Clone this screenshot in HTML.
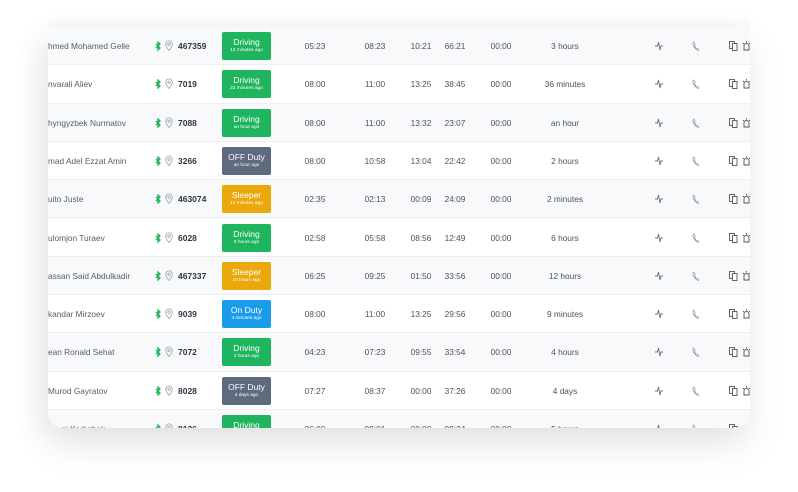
<!DOCTYPE html>
<html><head><meta charset="utf-8"><style>
*{margin:0;padding:0;box-sizing:border-box}
body{width:798px;height:492px;background:#fff;overflow:hidden;font-family:"Liberation Sans",sans-serif;position:relative}
.card{position:absolute;left:48px;top:27px;width:702px;height:401px;background:#fff;border-radius:0 0 16px 16px;overflow:hidden;box-shadow:0 18px 40px rgba(0,0,0,0.08),-10px 10px 30px rgba(0,0,0,0.05)}
.row{position:absolute;left:0;width:702px;height:38.3px;border-bottom:1px solid #eceef2}
.row.g{background:#f8f9fb}
.c{position:absolute;top:0;height:38px;line-height:38px;font-size:8.3px;color:#4a5160;white-space:nowrap}
.t{transform:translateX(-50%)}
.num{font-weight:bold;font-size:8.5px;color:#2f3542}
.badge{position:absolute;left:174px;top:5px;width:49px;height:28px;border-radius:2px;color:#fff;text-align:center}
.badge b{display:block;font-weight:normal;font-size:8.5px;line-height:10px;margin-top:5px}
.badge i{display:block;font-style:normal;font-size:4.8px;line-height:7px}
.dr{background:#1fb45e}.of{background:#5e6a7d}.sl{background:#eba80b}.on{background:#1b9ceb}
svg{position:absolute}
</style></head><body>
<div style="position:absolute;left:48px;top:14px;width:702px;height:14px;background:linear-gradient(#fff,#f8f9fb)"></div>
<div class="card" id="card"></div>
<script>
const d=[
["hmed Mohamed Gelle","467359","dr","Driving","13 minutes ago","05:23","08:23","10:21","66:21","00:00","3 hours"],
["nvarali Aliev","7019","dr","Driving","22 minutes ago","08:00","11:00","13:25","38:45","00:00","36 minutes"],
["hyngyzbek Nurmatov","7088","dr","Driving","an hour ago","08:00","11:00","13:32","23:07","00:00","an hour"],
["mad Adel Ezzat Amin","3266","of","OFF Duty","an hour ago","08:00","10:58","13:04","22:42","00:00","2 hours"],
["uito Juste","463074","sl","Sleeper","12 minutes ago","02:35","02:13","00:09","24:09","00:00","2 minutes"],
["ulomjon Turaev","6028","dr","Driving","6 hours ago","02:58","05:58","08:56","12:49","00:00","6 hours"],
["assan Said Abdulkadir","467337","sl","Sleeper","10 hours ago","06:25","09:25","01:50","33:56","00:00","12 hours"],
["kandar Mirzoev","9039","on","On Duty","4 minutes ago","08:00","11:00","13:25","29:56","00:00","9 minutes"],
["ean Ronald Sehat","7072","dr","Driving","2 hours ago","04:23","07:23","09:55","33:54","00:00","4 hours"],
["Murod Gayratov","8028","of","OFF Duty","4 days ago","07:27","08:37","00:00","37:26","00:00","4 days"],
["ulfani Kadyrbek","8126","dr","Driving","5 hours ago","06:00","09:01","00:00","09:34","00:00","5 hours"]];
const X=48;let h='';
d.forEach((r,i)=>{
const top=i*38.3;
h+=`<div class="row ${i%2==0?'g':''}" style="top:${top}px">
<div class="c" style="left:0;color:#555c6a">${r[0]}</div>
<svg style="left:${155-X}px;top:14px" width="6" height="10" viewBox="0 0 6 10"><path d="M1 3l4 4-2 2V1l2 2-4 4" fill="none" stroke="#1fb45e" stroke-width="1.3"/></svg>
<svg style="left:${165-X}px;top:13px" width="8" height="11" viewBox="0 0 8 11"><path d="M4 10.5C1.5 7.5.7 6 .7 4.2a3.3 3.3 0 016.6 0C7.3 6 6.5 7.5 4 10.5z" fill="none" stroke="#9aa1ad" stroke-width=".8"/><circle cx="4" cy="4.2" r="1.2" fill="none" stroke="#9aa1ad" stroke-width=".8"/></svg>
<div class="c num" style="left:${178-X}px">${r[1]}</div>
<div class="badge ${r[2]}"><b>${r[3]}</b><i>${r[4]}</i></div>
<div class="c t" style="left:${315-X}px">${r[5]}</div>
<div class="c t" style="left:${375-X}px">${r[6]}</div>
<div class="c t" style="left:${421-X}px">${r[7]}</div>
<div class="c t" style="left:${455-X}px">${r[8]}</div>
<div class="c t" style="left:${501-X}px">${r[9]}</div>
<div class="c t" style="left:${565-X}px">${r[10]}</div>
<svg style="left:${655-X}px;top:14px" width="8" height="10" viewBox="0 0 8 10"><path d="M0 5h2.5l1-4 1.5 8 1-4H8" fill="none" stroke="#6b7280" stroke-width=".9"/></svg>
<svg style="left:${692-X}px;top:14px" width="8" height="10" viewBox="0 0 8 10"><path d="M1.5 1c-1 1-.8 3 1 5.5s3.5 3.5 4.5 2.5l-1.5-1.5-1 .5-2-3 .7-1L2 1z" fill="none" stroke="#9aa1ad" stroke-width=".8"/></svg>
<svg style="left:${729-X}px;top:14px" width="9" height="10" viewBox="0 0 9 10"><rect x=".5" y=".5" width="5" height="7" fill="none" stroke="#555" stroke-width=".9"/><rect x="3.5" y="2.5" width="4.5" height="7" fill="#fff" stroke="#555" stroke-width=".9"/></svg>
<svg style="left:${742-X}px;top:14px" width="9" height="10" viewBox="0 0 9 10"><path d="M2 9V5a2.5 2.5 0 015 0v4H1.5h6M4.5 0v1.5M1 2l1 1M8 2L7 3" fill="none" stroke="#555" stroke-width=".9"/></svg>
</div>`;});
document.getElementById('card').innerHTML=h;
</script>
</body></html>
